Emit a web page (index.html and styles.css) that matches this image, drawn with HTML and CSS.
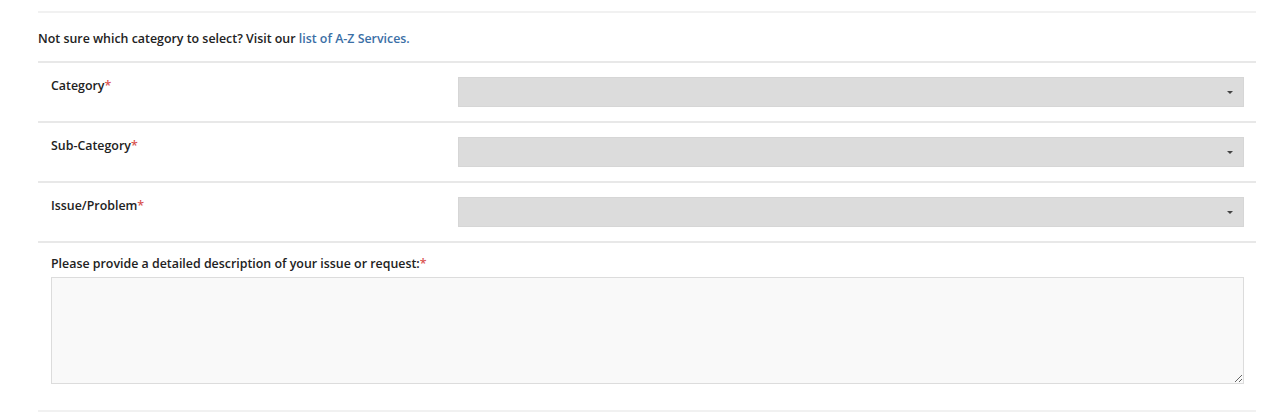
FILE: index.html
```html
<!DOCTYPE html>
<html lang="en">
<head>
<meta charset="utf-8">
<title>Request form</title>
<link rel="stylesheet" href="styles.css">
</head>
<body>
<div class="form">
  <p class="hint">Not sure which category to select? Visit our <a href="#">list of A-Z Services.</a></p>
  <div class="row">
    <label class="label">Category<span class="req">*</span></label>
    <div class="select"><span class="caret"></span></div>
  </div>
  <div class="row">
    <label class="label">Sub-Category<span class="req">*</span></label>
    <div class="select"><span class="caret"></span></div>
  </div>
  <div class="row">
    <label class="label">Issue/Problem<span class="req">*</span></label>
    <div class="select"><span class="caret"></span></div>
  </div>
  <div class="row block">
    <label class="label">Please provide a detailed description of your issue or request:<span class="req">*</span></label>
    <textarea class="textarea"></textarea>
  </div>
</div>
</body>
</html>
```
FILE: styles.css
```css
* { box-sizing: border-box; }
html, body { margin: 0; padding: 0; background: #fff; }
body {
  font-family: "Open Sans", "Liberation Sans", sans-serif;
  font-size: 12.4px;
  font-weight: 600;
  color: #222;
}
.form {
  margin: 11px 24px 0 38px;
  border-top: 2px solid #f1f1f1;
}
.hint {
  margin: 0;
  padding: 17px 0 13px;
  line-height: 18px;
}
.hint a { color: #3b6fa6; text-decoration: none; }
.row {
  display: flex;
  align-items: flex-start;
  border-top: 2px solid #e8e8e8;
  padding: 14px 12px 14px 13px;
}
.label {
  width: 407px;
  flex: none;
  line-height: 18px;
}
.req { color: #d9534f; }
.select {
  flex: 1;
  height: 30px;
  background: #dcdcdc;
  border: 1px solid #d6d6d6;
  display: flex;
  align-items: center;
  justify-content: flex-end;
  padding-right: 10px;
}
.caret {
  width: 0; height: 0;
  border-left: 3.5px solid transparent;
  border-right: 3.5px solid transparent;
  border-top: 3.5px solid #444;
}
.row.block {
  display: block;
  padding: 12px 12px 26px 13px;
  border-bottom: 2px solid #f1f1f1;
}
.row.block .label { display: block; width: auto; margin-bottom: 4px; }
.textarea {
  display: block;
  width: 100%;
  height: 107px;
  background: #f9f9f9;
  border: 1px solid #dcdcdc;
  border-radius: 0;
  resize: vertical;
  margin: 0;
  font: inherit;
}
```
